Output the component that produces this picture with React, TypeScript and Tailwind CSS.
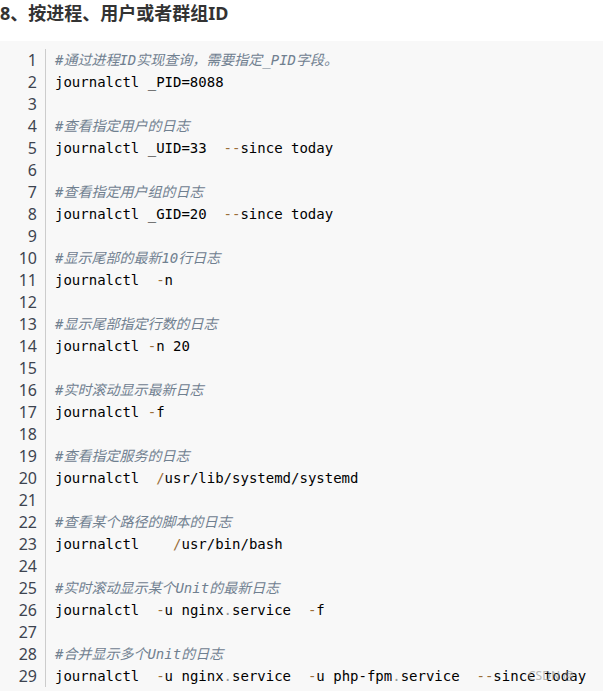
import React from "react";

type Tok = { t: string; c?: "op" | "pu" | "cm" };
const L = (...toks: (string | Tok)[]) => toks.map((x) => (typeof x === "string" ? { t: x } : x));
const op = (t: string): Tok => ({ t, c: "op" });
const pu = (t: string): Tok => ({ t, c: "pu" });
const cm = (t: string): Tok => ({ t, c: "cm" });

const lines: Tok[][] = [
  L(cm("#通过进程ID实现查询，需要指定_PID字段。")),
  L("journalctl _PID=8088"),
  L(),
  L(cm("#查看指定用户的日志")),
  L("journalctl _UID=33  ", op("--"), "since today"),
  L(),
  L(cm("#查看指定用户组的日志")),
  L("journalctl _GID=20  ", op("--"), "since today"),
  L(),
  L(cm("#显示尾部的最新10行日志")),
  L("journalctl  ", op("-"), "n"),
  L(),
  L(cm("#显示尾部指定行数的日志")),
  L("journalctl ", op("-"), "n 20"),
  L(),
  L(cm("#实时滚动显示最新日志")),
  L("journalctl ", op("-"), "f"),
  L(),
  L(cm("#查看指定服务的日志")),
  L("journalctl  ", op("/"), "usr/lib/systemd/systemd"),
  L(),
  L(cm("#查看某个路径的脚本的日志")),
  L("journalctl    ", op("/"), "usr/bin/bash"),
  L(),
  L(cm("#实时滚动显示某个Unit的最新日志")),
  L("journalctl  ", op("-"), "u nginx", pu("."), "service  ", op("-"), "f"),
  L(),
  L(cm("#合并显示多个Unit的日志")),
  L("journalctl  ", op("-"), "u nginx", pu("."), "service  ", op("-"), "u php-fpm", pu("."), "service  ", op("--"), "since today"),
];

const cls = {
  op: "text-[#9a6e3a]",
  pu: "text-[#999999]",
  cm: "text-[#708090] italic",
};

export default function App() {
  return (
    <div className="w-[603px] h-[691px] overflow-hidden bg-white relative">
      <h3
        className="text-[18px] leading-[24px] font-bold text-[#333333] m-0 pt-[1px]"
        style={{ fontFamily: '"Noto Sans", "Noto Sans CJK SC", sans-serif' }}
      >
        8、按进程、用户或者群组ID
      </h3>
      <div className="mt-[16px] bg-[#f8f8f8] pt-[8px] pb-[8px] flex">
        <div
          className="w-[46px] pr-[8px] border-r border-[#cccccc] text-right text-[16px] leading-[22px] text-[#3d4450]"
          style={{ fontFamily: '"Noto Sans", sans-serif' }}
        >
          {lines.map((_, i) => (
            <div key={i} className="h-[22px]">
              {i + 1}
            </div>
          ))}
        </div>
        <div
          className="pl-[9px] text-[14px] leading-[22px] text-black whitespace-pre"
          style={{ fontFamily: '"DejaVu Sans Mono", "Noto Sans CJK SC", monospace' }}
        >
          {lines.map((toks, i) => (
            <div key={i} className="h-[22px]">
              {toks.map((tk, j) => (
                <span key={j} className={tk.c ? cls[tk.c] : undefined}>
                  {tk.t}
                </span>
              ))}
            </div>
          ))}
        </div>
      </div>
      <div
        className="absolute left-[528px] top-[668px] text-[12px] leading-[16px] text-[#9a9a9a] opacity-70"
        style={{ fontFamily: '"Noto Sans", sans-serif' }}
      >
        CSDN @
      </div>
    </div>
  );
}
